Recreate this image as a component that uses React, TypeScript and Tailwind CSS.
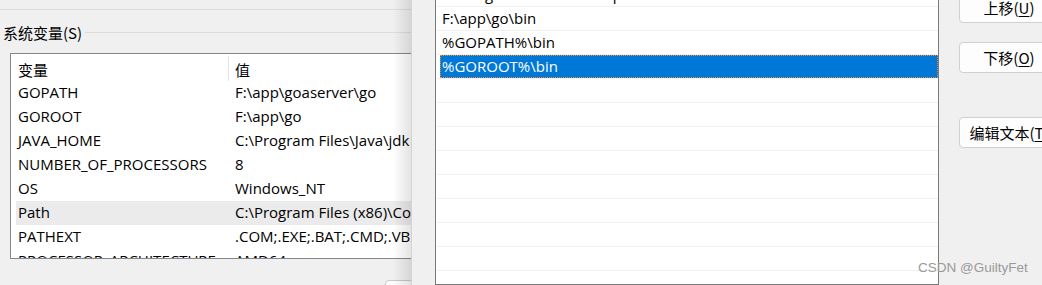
import React from "react";

const leftRows: [string, string, boolean?][] = [
  ["GOPATH", "F:\\app\\goaserver\\go"],
  ["GOROOT", "F:\\app\\go"],
  ["JAVA_HOME", "C:\\Program Files\\Java\\jdk1.8.0_201"],
  ["NUMBER_OF_PROCESSORS", "8"],
  ["OS", "Windows_NT"],
  ["Path", "C:\\Program Files (x86)\\Common Files\\Oracle\\Java", true],
  ["PATHEXT", ".COM;.EXE;.BAT;.CMD;.VBS;.VBE;.JS"],
  ["PROCESSOR_ARCHITECTURE", "AMD64"],
];

const pathRows: string[] = [
  "C:\\Program Files\\Bandizip\\",
  "F:\\app\\go\\bin",
  "%GOPATH%\\bin",
  "%GOROOT%\\bin",
  "",
  "",
  "",
  "",
  "",
  "",
  "",
  "",
  "",
  "",
];

function Btn({ label, mn, className }: { label: string; mn: string; className?: string }) {
  return (
    <div
      className={
        "w-[100px] h-[31px] shrink-0 rounded-[4px] border border-[#d0d0d0] bg-[#fdfdfd] flex items-center justify-center text-[15px] text-black whitespace-nowrap " +
        (className ?? "")
      }
    >
      {label}(<span className="underline underline-offset-2">{mn}</span>)
    </div>
  );
}

export default function App() {
  return (
    <div className="relative w-[1042px] h-[285px] overflow-hidden flex bg-[#f0f0f0] text-black font-[family-name:'Open_Sans','Noto_Sans_CJK_SC',sans-serif] text-[15px] leading-none">
      {/* Background window */}
      <div className="relative w-[411px] shrink-0 h-full overflow-hidden">
        <div className="h-[9px]" />
        <div className="h-px bg-[#dcdcdc]" />
        <div className="mt-[11px] h-[22px] flex items-center">
          <span className="pl-[3px] text-[15px] whitespace-nowrap font-[family-name:'Noto_Sans_CJK_SC',sans-serif]">系统变量(S)</span>
          <div className="flex-1 h-px bg-[#dcdcdc] ml-[3px]" />
        </div>
        <div className="mt-[10px] ml-[10px] w-[440px] h-[206px] border border-r-0 border-[#828790] bg-white overflow-hidden">
          <div className="h-[27px] flex items-stretch font-[family-name:'Noto_Sans_CJK_SC',sans-serif]">
            <div className="w-[217px] pl-[7px] pt-[3px] flex items-center">变量</div>
            <div className="w-px bg-[#e5e5e5] mt-[2px]" />
            <div className="pl-[6px] pt-[3px] flex items-center">值</div>
          </div>
          {leftRows.map(([n, v, hl]) => (
            <div
              key={n}
              className={"h-[24px] mx-[5px] pb-px flex items-center whitespace-nowrap " + (hl ? "bg-[#ebebeb]" : "")}
            >
              <div className="w-[213px] pl-[2px] shrink-0">{n}</div>
              <div className="pl-[6px]">{v}</div>
            </div>
          ))}
        </div>
        <div className="mt-[21px] ml-[385px] w-[100px] h-[30px] rounded-[4px] border border-[#c8c8c8] bg-[#fdfdfd]" />
        {/* window shadow */}
        <div className="absolute right-0 top-0 bottom-0 w-[18px] bg-gradient-to-r from-black/0 to-black/[0.11]" />
      </div>

      {/* Foreground dialog */}
      <div className="flex-1 h-full flex bg-[#f0f0f0] overflow-hidden border-l border-[#d4d4d4]">
        <div className="ml-[23px] w-[504px] h-[285px] shrink-0 border-x border-b border-[#7a7a7a] bg-white overflow-hidden">
          <div className="-mt-[17px]">
            {pathRows.map((t, i) => (
              <div key={i} className="ml-px h-[24px] border-b border-[#f0f0f0] flex">
                {i === 3 ? (
                  <div className="ml-[3px] flex-1 bg-[#0078d7] text-white flex items-center pl-[2px] outline outline-1 outline-dotted outline-[#f08a30] -outline-offset-1">
                    {t}
                  </div>
                ) : (
                  <div className="ml-[3px] flex-1 flex items-center pl-[2px] whitespace-nowrap">{t}</div>
                )}
              </div>
            ))}
          </div>
        </div>
        <div className="ml-[20px] flex flex-col font-[family-name:'Noto_Sans_CJK_SC',sans-serif]">
          <Btn label="上移" mn="U" className="-mt-[8px]" />
          <Btn label="下移" mn="O" className="mt-[19px]" />
          <Btn label="编辑文本" mn="T" className="mt-[44px]" />
        </div>
      </div>

      <div className="absolute left-[918px] top-[261px] text-[13.5px] text-[#9a9a9a] whitespace-nowrap font-[family-name:'Liberation_Sans',sans-serif]">
        CSDN @GuiltyFet
      </div>
    </div>
  );
}
